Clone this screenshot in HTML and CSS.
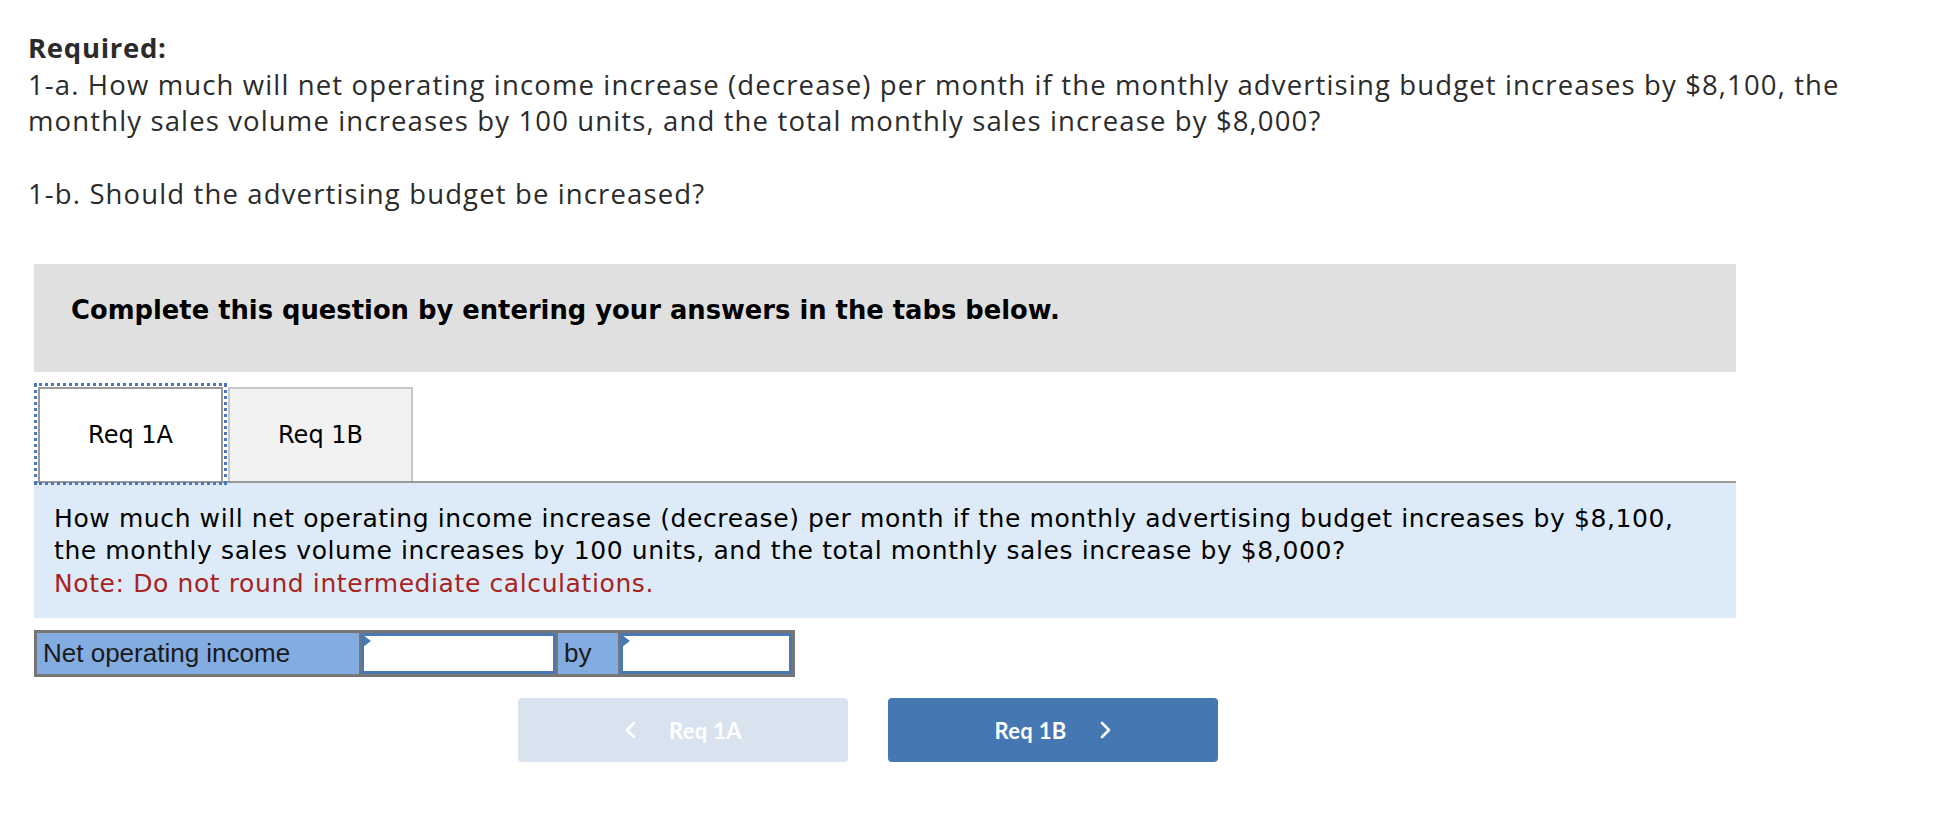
FILE: index.html
```html
<!DOCTYPE html>
<html lang="en">
<head>
<meta charset="utf-8">
<title>Required</title>
<link rel="stylesheet" href="styles.css">
</head>
<body>
<div class="page">
  <div class="required">
    <div class="req-title">Required:</div>
    <div>1-a. How much will net operating income increase (decrease) per month if the monthly advertising budget increases by $8,100, the monthly sales volume increases by 100 units, and the total monthly sales increase by $8,000?</div>
    <div class="blank">&nbsp;</div>
    <div>1-b. Should the advertising budget be increased?</div>
  </div>

  <div class="panel">
    <div class="instructions">Complete this question by entering your answers in the tabs below.</div>

    <div class="tabs">
      <div class="tab tab-active">Req 1A</div>
      <div class="tab tab-idle">Req 1B</div>
    </div>

    <div class="question">
      <div>How much will net operating income increase (decrease) per month if the monthly advertising budget increases by $8,100,<br>the monthly sales volume increases by 100 units, and the total monthly sales increase by $8,000?</div>
      <div class="note">Note: Do not round intermediate calculations.</div>
    </div>

    <div class="answer-row">
      <div class="cell label-cell">Net operating income</div>
      <div class="cell input-cell input-wide"><span class="flag"></span></div>
      <div class="cell label-cell by-cell">by</div>
      <div class="cell input-cell input-narrow"><span class="flag"></span></div>
    </div>

    <div class="nav">
      <div class="nav-btn nav-prev">
        <svg class="chev" width="12" height="18" viewBox="0 0 12 18"><polyline points="10,2 3,9 10,16" fill="none" stroke="#ffffff" stroke-width="2.6" stroke-linecap="round" stroke-linejoin="round"/></svg>
        <span>Req 1A</span>
      </div>
      <div class="nav-btn nav-next">
        <span>Req 1B</span>
        <svg class="chev" width="12" height="18" viewBox="0 0 12 18"><polyline points="2,2 9,9 2,16" fill="none" stroke="#ffffff" stroke-width="2.6" stroke-linecap="round" stroke-linejoin="round"/></svg>
      </div>
    </div>
  </div>
</div>
</body>
</html>
```

FILE: styles.css
```css
html, body {
  margin: 0;
  padding: 0;
  background: #ffffff;
}

.page {
  padding: 30px 28px 0 28px;
}

.required {
  font-family: "Open Sans", "Lato", sans-serif;
  font-size: 27.5px;
  letter-spacing: 1.13px;
  line-height: 36.5px;
  color: #2b2b2b;
}

.req-title {
  font-weight: 700;
  letter-spacing: 0.7px;
}

.panel {
  margin-top: 51px;
  margin-left: 6px;
  width: 1702px;
}

.instructions {
  height: 108px;
  box-sizing: border-box;
  padding: 31px 0 0 37px;
  background: #e0e0e0;
  font-family: "DejaVu Sans", Verdana, sans-serif;
  font-weight: 700;
  font-size: 25.8px;
  line-height: 30px;
  color: #000000;
}

.tabs {
  display: flex;
  gap: 5px;
  margin-top: 15px;
  padding-left: 4px;
  border-bottom: 2px solid #999999;
}

.tab {
  width: 185px;
  height: 94px;
  box-sizing: border-box;
  display: flex;
  align-items: center;
  justify-content: center;
  font-family: "DejaVu Sans", Verdana, sans-serif;
  font-size: 24px;
  color: #000000;
}

.tab-active {
  background: #ffffff;
  border: 2px solid #999999;
  border-bottom: none;
  outline: 3px dotted #4a78b8;
  outline-offset: 1px;
}

.tab-idle {
  background: #f2f2f2;
  border: 2px solid #c8c8c8;
  border-bottom: none;
}

.question {
  background: #ddebf8;
  padding: 20px 20px 18px 20px;
  font-family: "DejaVu Sans", Verdana, sans-serif;
  font-size: 25px;
  letter-spacing: 0.6px;
  line-height: 32.5px;
  color: #000000;
}

.note {
  color: #a8231f;
}

.answer-row {
  display: flex;
  gap: 2px;
  margin-top: 12px;
  width: max-content;
  height: 47px;
  box-sizing: border-box;
  border: 3px solid #767676;
  background: #767676;
}

.cell {
  box-sizing: border-box;
  height: 100%;
}

.label-cell {
  width: 322px;
  background: #83ace0;
  display: flex;
  align-items: center;
  padding-left: 6px;
  font-family: "Liberation Sans", Arial, sans-serif;
  font-size: 26px;
  color: #1a1a1a;
}

.by-cell {
  width: 60px;
}

.input-cell {
  position: relative;
  background: #ffffff;
  border: 3px solid #4a78b5;
}

.input-wide {
  width: 195px;
}

.input-narrow {
  width: 172px;
}

.flag {
  position: absolute;
  left: -1px;
  top: -1px;
  width: 0;
  height: 0;
  border-top: 6px solid transparent;
  border-bottom: 6px solid transparent;
  border-left: 8px solid #4a78b5;
}

.nav {
  display: flex;
  gap: 40px;
  margin-top: 21px;
  padding-left: 484px;
}

.nav-btn {
  width: 330px;
  height: 64px;
  box-sizing: border-box;
  border-radius: 4px;
  display: flex;
  align-items: center;
  justify-content: center;
  gap: 33px;
  font-family: "Lato", "Open Sans", sans-serif;
  font-weight: 700;
  font-size: 22px;
  letter-spacing: 0.3px;
  color: #ffffff;
}

.nav-prev {
  background: #d9e3ef;
}

.nav-next {
  background: #4577b3;
}

.chev {
  display: block;
}
```
